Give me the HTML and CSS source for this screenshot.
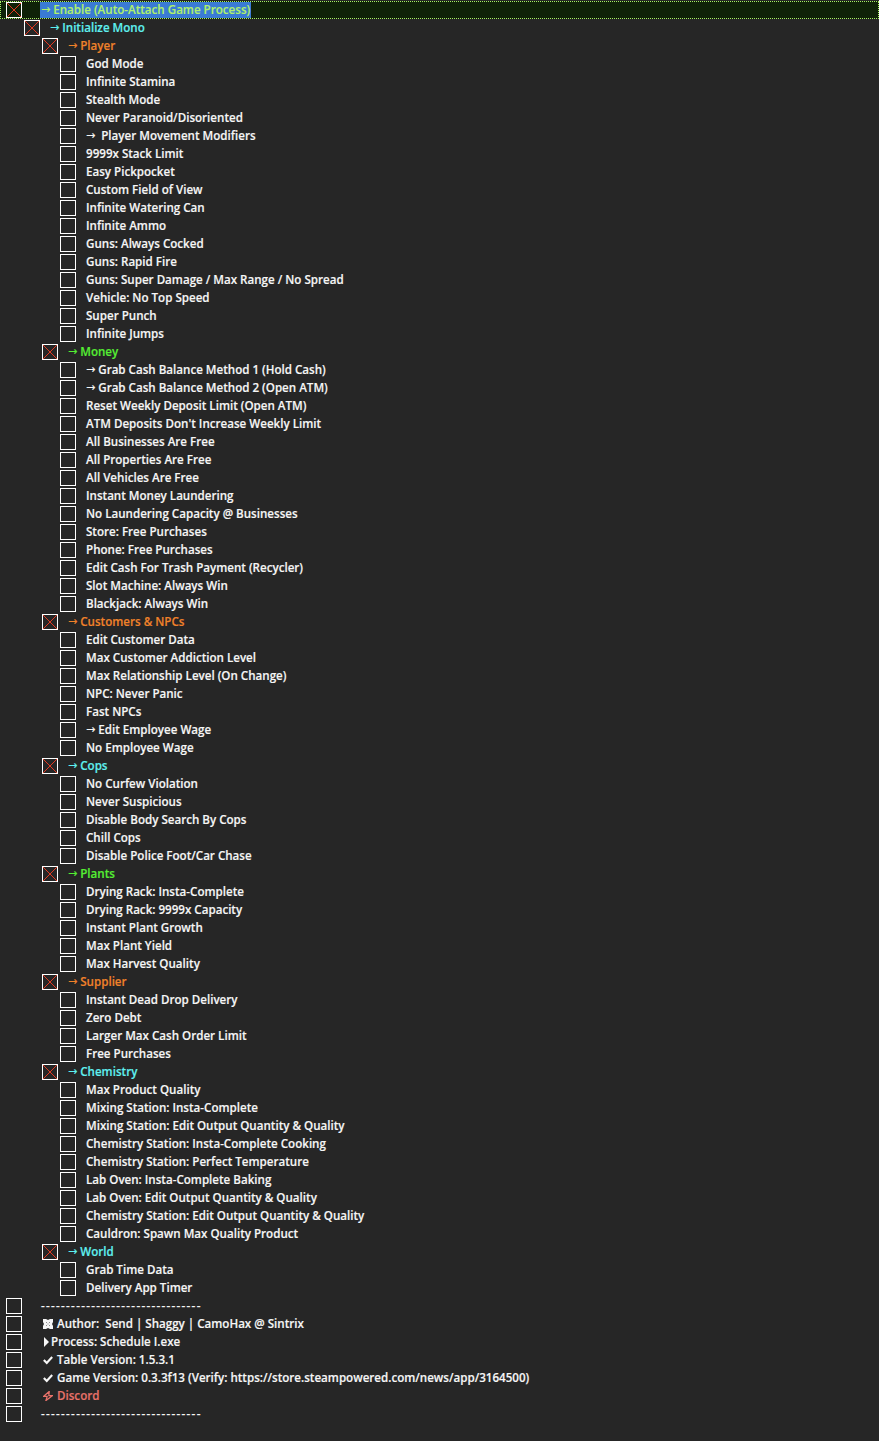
FILE: index.html
```html
<!DOCTYPE html>
<html lang="en">
<head>
<meta charset="utf-8">
<title>Cheat Table</title>
<link rel="stylesheet" href="styles.css">
</head>
<body>
<main class="tree">
<div class="row l0 focus"><span class="box on"><svg viewBox="0 0 14 14"><path d="M0 0L14 14M14 0L0 14"/></svg></span><span class="label green sel"><span class="arr">→</span> Enable (Auto-Attach Game Process)</span></div>
<div class="row l1"><span class="box on"><svg viewBox="0 0 14 14"><path d="M0 0L14 14M14 0L0 14"/></svg></span><span class="label cyan"><span class="arr">→</span> Initialize Mono</span></div>
<div class="row l2"><span class="box on"><svg viewBox="0 0 14 14"><path d="M0 0L14 14M14 0L0 14"/></svg></span><span class="label orange"><span class="arr">→</span> Player</span></div>
<div class="row l3"><span class="box"></span><span class="label">God Mode</span></div>
<div class="row l3"><span class="box"></span><span class="label">Infinite Stamina</span></div>
<div class="row l3"><span class="box"></span><span class="label">Stealth Mode</span></div>
<div class="row l3"><span class="box"></span><span class="label">Never Paranoid/Disoriented</span></div>
<div class="row l3"><span class="box"></span><span class="label"><span class="arr">→</span> &nbsp;Player Movement Modifiers</span></div>
<div class="row l3"><span class="box"></span><span class="label">9999x Stack Limit</span></div>
<div class="row l3"><span class="box"></span><span class="label">Easy Pickpocket</span></div>
<div class="row l3"><span class="box"></span><span class="label">Custom Field of View</span></div>
<div class="row l3"><span class="box"></span><span class="label">Infinite Watering Can</span></div>
<div class="row l3"><span class="box"></span><span class="label">Infinite Ammo</span></div>
<div class="row l3"><span class="box"></span><span class="label">Guns: Always Cocked</span></div>
<div class="row l3"><span class="box"></span><span class="label">Guns: Rapid Fire</span></div>
<div class="row l3"><span class="box"></span><span class="label">Guns: Super Damage / Max Range / No Spread</span></div>
<div class="row l3"><span class="box"></span><span class="label">Vehicle: No Top Speed</span></div>
<div class="row l3"><span class="box"></span><span class="label">Super Punch</span></div>
<div class="row l3"><span class="box"></span><span class="label">Infinite Jumps</span></div>
<div class="row l2"><span class="box on"><svg viewBox="0 0 14 14"><path d="M0 0L14 14M14 0L0 14"/></svg></span><span class="label lime"><span class="arr">→</span> Money</span></div>
<div class="row l3"><span class="box"></span><span class="label"><span class="arr">→</span> Grab Cash Balance Method 1 (Hold Cash)</span></div>
<div class="row l3"><span class="box"></span><span class="label"><span class="arr">→</span> Grab Cash Balance Method 2 (Open ATM)</span></div>
<div class="row l3"><span class="box"></span><span class="label">Reset Weekly Deposit Limit (Open ATM)</span></div>
<div class="row l3"><span class="box"></span><span class="label">ATM Deposits Don't Increase Weekly Limit</span></div>
<div class="row l3"><span class="box"></span><span class="label">All Businesses Are Free</span></div>
<div class="row l3"><span class="box"></span><span class="label">All Properties Are Free</span></div>
<div class="row l3"><span class="box"></span><span class="label">All Vehicles Are Free</span></div>
<div class="row l3"><span class="box"></span><span class="label">Instant Money Laundering</span></div>
<div class="row l3"><span class="box"></span><span class="label">No Laundering Capacity @ Businesses</span></div>
<div class="row l3"><span class="box"></span><span class="label">Store: Free Purchases</span></div>
<div class="row l3"><span class="box"></span><span class="label">Phone: Free Purchases</span></div>
<div class="row l3"><span class="box"></span><span class="label">Edit Cash For Trash Payment (Recycler)</span></div>
<div class="row l3"><span class="box"></span><span class="label">Slot Machine: Always Win</span></div>
<div class="row l3"><span class="box"></span><span class="label">Blackjack: Always Win</span></div>
<div class="row l2"><span class="box on"><svg viewBox="0 0 14 14"><path d="M0 0L14 14M14 0L0 14"/></svg></span><span class="label orange"><span class="arr">→</span> Customers &amp; NPCs</span></div>
<div class="row l3"><span class="box"></span><span class="label">Edit Customer Data</span></div>
<div class="row l3"><span class="box"></span><span class="label">Max Customer Addiction Level</span></div>
<div class="row l3"><span class="box"></span><span class="label">Max Relationship Level (On Change)</span></div>
<div class="row l3"><span class="box"></span><span class="label">NPC: Never Panic</span></div>
<div class="row l3"><span class="box"></span><span class="label">Fast NPCs</span></div>
<div class="row l3"><span class="box"></span><span class="label"><span class="arr">→</span> Edit Employee Wage</span></div>
<div class="row l3"><span class="box"></span><span class="label">No Employee Wage</span></div>
<div class="row l2"><span class="box on"><svg viewBox="0 0 14 14"><path d="M0 0L14 14M14 0L0 14"/></svg></span><span class="label cyan"><span class="arr">→</span> Cops</span></div>
<div class="row l3"><span class="box"></span><span class="label">No Curfew Violation</span></div>
<div class="row l3"><span class="box"></span><span class="label">Never Suspicious</span></div>
<div class="row l3"><span class="box"></span><span class="label">Disable Body Search By Cops</span></div>
<div class="row l3"><span class="box"></span><span class="label">Chill Cops</span></div>
<div class="row l3"><span class="box"></span><span class="label">Disable Police Foot/Car Chase</span></div>
<div class="row l2"><span class="box on"><svg viewBox="0 0 14 14"><path d="M0 0L14 14M14 0L0 14"/></svg></span><span class="label lime"><span class="arr">→</span> Plants</span></div>
<div class="row l3"><span class="box"></span><span class="label">Drying Rack: Insta-Complete</span></div>
<div class="row l3"><span class="box"></span><span class="label">Drying Rack: 9999x Capacity</span></div>
<div class="row l3"><span class="box"></span><span class="label">Instant Plant Growth</span></div>
<div class="row l3"><span class="box"></span><span class="label">Max Plant Yield</span></div>
<div class="row l3"><span class="box"></span><span class="label">Max Harvest Quality</span></div>
<div class="row l2"><span class="box on"><svg viewBox="0 0 14 14"><path d="M0 0L14 14M14 0L0 14"/></svg></span><span class="label orange"><span class="arr">→</span> Supplier</span></div>
<div class="row l3"><span class="box"></span><span class="label">Instant Dead Drop Delivery</span></div>
<div class="row l3"><span class="box"></span><span class="label">Zero Debt</span></div>
<div class="row l3"><span class="box"></span><span class="label">Larger Max Cash Order Limit</span></div>
<div class="row l3"><span class="box"></span><span class="label">Free Purchases</span></div>
<div class="row l2"><span class="box on"><svg viewBox="0 0 14 14"><path d="M0 0L14 14M14 0L0 14"/></svg></span><span class="label cyan"><span class="arr">→</span> Chemistry</span></div>
<div class="row l3"><span class="box"></span><span class="label">Max Product Quality</span></div>
<div class="row l3"><span class="box"></span><span class="label">Mixing Station: Insta-Complete</span></div>
<div class="row l3"><span class="box"></span><span class="label">Mixing Station: Edit Output Quantity &amp; Quality</span></div>
<div class="row l3"><span class="box"></span><span class="label">Chemistry Station: Insta-Complete Cooking</span></div>
<div class="row l3"><span class="box"></span><span class="label">Chemistry Station: Perfect Temperature</span></div>
<div class="row l3"><span class="box"></span><span class="label">Lab Oven: Insta-Complete Baking</span></div>
<div class="row l3"><span class="box"></span><span class="label">Lab Oven: Edit Output Quantity &amp; Quality</span></div>
<div class="row l3"><span class="box"></span><span class="label">Chemistry Station: Edit Output Quantity &amp; Quality</span></div>
<div class="row l3"><span class="box"></span><span class="label">Cauldron: Spawn Max Quality Product</span></div>
<div class="row l2"><span class="box on"><svg viewBox="0 0 14 14"><path d="M0 0L14 14M14 0L0 14"/></svg></span><span class="label cyan"><span class="arr">→</span> World</span></div>
<div class="row l3"><span class="box"></span><span class="label">Grab Time Data</span></div>
<div class="row l3"><span class="box"></span><span class="label">Delivery App Timer</span></div>
<div class="row l0"><span class="box"></span><span class="label sep">--------------------------------</span></div>
<div class="row l0"><span class="box"></span><span class="label"><svg class="ico" viewBox="0 0 10 10"><path class="fill" d="M0 0h3l2 1 2-1h3v3L9 5l1 2v3H7L5 9l-2 1H0V7l1-2-1-2z"/><path class="cut" d="M3 3h1v1H3zM6 3h1v1H6zM4.500 4.500h1v1h-1zM3 6h1v1H3zM6 6h1v1H6z"/></svg><span class="gap">Author: &nbsp;Send | Shaggy | CamoHax @ Sintrix</span></span></div>
<div class="row l0"><span class="box"></span><span class="label"><svg class="ico tri" viewBox="0 0 6 12"><path class="fill" d="M1 1l5 5-5 5z"/></svg><span class="gap narrow">Process: Schedule I.exe</span></span></div>
<div class="row l0"><span class="box"></span><span class="label"><svg class="ico" viewBox="0 0 12 12"><path class="tick" d="M1 6L4.500 9.500L11 2.500"/></svg><span class="gap">Table Version: 1.5.3.1</span></span></div>
<div class="row l0"><span class="box"></span><span class="label"><svg class="ico" viewBox="0 0 12 12"><path class="tick" d="M1 6L4.500 9.500L11 2.500"/></svg><span class="gap">Game Version: 0.3.3f13 (Verify: https://store.steampowered.com/news/app/3164500)</span></span></div>
<div class="row l0"><span class="box"></span><span class="label red"><svg class="ico" viewBox="0 0 12 12"><path class="bolt" d="M7.500 .5L.5 6.500H5L3.500 11.500L11.500 5.500H7z"/></svg><span class="gap">Discord</span></span></div>
<div class="row l0"><span class="box"></span><span class="label sep">--------------------------------</span></div>
</main>
</body>
</html>
```
FILE: styles.css
```css
* { box-sizing: border-box; }
html, body { margin: 0; height: 100%; background: #262626; }
.tree {
  padding-top: 1px;
  font: 600 11.6px/16px "Open Sans", sans-serif;
  color: #f6f6f6;
  -webkit-text-stroke: 0.15px currentColor;
}
.row { display: flex; align-items: center; height: 18px; white-space: nowrap; }
.l0 { padding-left: 6px; }
.l1 { padding-left: 24px; }
.l2 { padding-left: 42px; }
.l3 { padding-left: 60px; }
.box {
  flex: none;
  width: 16px;
  height: 16px;
  border: 1px solid #fff;
  display: block;
}
.box svg { display: block; width: 14px; height: 14px; }
.box path { stroke: #e23a22; stroke-width: 1; fill: none; }
.label { margin-left: 9px; padding: 0 1px; display: flex; align-items: center; white-space: pre; }
.arr { font: 400 11px/16px "DejaVu Sans", sans-serif; }
.l0 .label { margin-left: 18px; }
.focus { background: #0f2208; outline: 1px dotted #a9ef66; outline-offset: -1px; }
.sel { background: #3a7bd5; height: 16px; }
.green { color: #b0f06c; }
.cyan { color: #5ff0f0; }
.orange { color: #f0822a; }
.lime { color: #55ee33; }
.red { color: #e8726a; }
.sep { letter-spacing: 1.290px; }
.ico { flex: none; width: 10px; height: 10px; margin-left: 2px; }
.tri { width: 6px; height: 12px; }
.gap { margin-left: 4px; }
.narrow { margin-left: 2px; }
.fill { fill: #f6f6f6; }
.cut { fill: #8c8c8c; }
.tick { fill: none; stroke: #f6f6f6; stroke-width: 2.600; }
.bolt { fill: none; stroke: #e8726a; stroke-width: 1.500; }
```
